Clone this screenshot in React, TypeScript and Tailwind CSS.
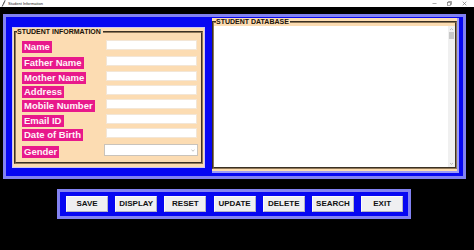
const labels = [
  { text: "Name", mt: "mt-0" },
  { text: "Father Name", mt: "mt-[4px]" },
  { text: "Mother Name", mt: "mt-[3px]" },
  { text: "Address", mt: "mt-[2px]" },
  { text: "Mobile Number", mt: "mt-[2px]" },
  { text: "Email ID", mt: "mt-[3px]" },
  { text: "Date of Birth", mt: "mt-[2px]" },
];

const buttons = ["SAVE", "DISPLAY", "RESET", "UPDATE", "DELETE", "SEARCH", "EXIT"];

function TitleBar() {
  return (
    <div className="h-[7px] bg-white flex items-center relative shrink-0">
      <svg width="5" height="7" viewBox="0 0 5 7" className="ml-[1px]">
        <path d="M4 0.5 L1.2 6.5" stroke="#333" strokeWidth="0.9" />
        <path d="M4 0.5 L3 3.5" stroke="#777" strokeWidth="0.8" />
      </svg>
      <span className="ml-[2px] text-[4px] leading-[7px] text-[#222]">Student Information</span>
      <div className="ml-auto mr-[7px] flex items-center gap-[10px]">
        <svg width="5" height="5" viewBox="0 0 5 5">
          <path d="M0.5 2.5 H4.5" stroke="#888" strokeWidth="0.7" />
        </svg>
        <svg width="5" height="5" viewBox="0 0 5 5">
          <rect x="0.5" y="1.3" width="3" height="3" fill="none" stroke="#777" strokeWidth="0.7" />
          <path d="M1.5 1.3 V0.5 H4.5 V3.4 H3.5" fill="none" stroke="#777" strokeWidth="0.7" />
        </svg>
        <svg width="5" height="5" viewBox="0 0 5 5">
          <path d="M0.7 0.7 L4.3 4.3 M4.3 0.7 L0.7 4.3" stroke="#777" strokeWidth="0.7" />
        </svg>
      </div>
    </div>
  );
}

function StudentInfo() {
  return (
    <div className="ml-[6px] mt-[10px] w-[193px] h-[141px] bg-[#fcdcb2] border border-[#ccc6f2] px-[1px] pb-[3px] flex">
      <fieldset className="flex-1 border-2 [border-style:groove] border-[#8f7858]">
        <legend className="ml-[1px] pr-[2px] text-[7px] leading-[8px] font-bold text-[#1a1208]">
          STUDENT INFORMATION
        </legend>
        <div className="pt-[3px] pl-[6px] flex flex-col">
          {labels.map((l) => (
            <div key={l.text} className={`${l.mt} h-[12px] flex items-center`}>
              <div className="w-[84px] shrink-0">
                <span className="inline-block bg-[#e8198b] text-[#fff4f8] text-[9.5px] leading-[12px] font-bold px-[2px]">
                  {l.text}
                </span>
              </div>
              <div className="w-[91px] h-[10px] bg-white border border-[#f3e6d6]" />
            </div>
          ))}
          <div className="mt-[5px] h-[12px] flex items-center">
            <div className="w-[84px] shrink-0">
              <span className="inline-block bg-[#e8198b] text-[#fff4f8] text-[9.5px] leading-[12px] font-bold px-[2px]">
                Gender
              </span>
            </div>
            <div className="-ml-[2px] w-[94px] h-[12px] bg-white border border-[#c9c3bb] flex items-center justify-end pr-[2px]">
              <svg width="4" height="3" viewBox="0 0 4 3">
                <path d="M0.5 0.8 L2 2.2 L3.5 0.8" fill="none" stroke="#999" strokeWidth="0.6" />
              </svg>
            </div>
          </div>
        </div>
      </fieldset>
    </div>
  );
}

function StudentDatabase() {
  return (
    <div className="ml-[7px] mt-[1px] w-[247px] h-[155px] border-r-2 border-b-2 border-[#9c9cf6] bg-[#fcdcb2] pb-[2px] flex">
      <fieldset className="flex-1 border-2 [border-style:groove] border-[#8f7858] flex min-w-0">
        <legend className="ml-[2px] pr-[1px] text-[7px] leading-[8px] font-bold text-[#1a1208]">
          STUDENT DATABASE
        </legend>
        <div className="flex-1 flex bg-white">
          <div className="flex-1" />
          <div className="w-[7px] bg-[#f0f0f0] flex flex-col items-center">
            <svg width="5" height="5" viewBox="0 0 5 5" className="mt-[1px]">
              <path d="M1 3 L2.5 1.6 L4 3" fill="none" stroke="#999" strokeWidth="0.6" />
            </svg>
            <div className="w-[5px] h-[7px] bg-[#c8c8c8]" />
            <div className="flex-1" />
            <svg width="5" height="5" viewBox="0 0 5 5" className="mb-[1px]">
              <path d="M1 2 L2.5 3.4 L4 2" fill="none" stroke="#999" strokeWidth="0.6" />
            </svg>
          </div>
        </div>
      </fieldset>
    </div>
  );
}

function ButtonBar() {
  return (
    <div className="mt-[10px] ml-[57px] w-[354px] h-[30px] border-[3px] border-[#8282f2] bg-[#0707f2] flex items-center pl-[6px] gap-[7.2px]">
      {buttons.map((b) => (
        <button
          key={b}
          className="w-[42px] h-[16px] bg-[#efeff1] border border-[#fbfbfb] border-r-[#b4b4c4] border-b-[#b4b4c4] text-[8px] leading-[14px] font-bold text-[#111] text-center"
        >
          {b}
        </button>
      ))}
    </div>
  );
}

export default function App() {
  return (
    <div className="w-[474px] h-[250px] bg-black flex flex-col overflow-hidden font-['Liberation_Sans',Arial,sans-serif]">
      <TitleBar />
      <div className="mt-[7px] ml-[3px] w-[463px] h-[165px] shrink-0 border-[3px] border-[#8282f2] bg-[#0707f2] flex items-start">
        <StudentInfo />
        <StudentDatabase />
      </div>
      <ButtonBar />
    </div>
  );
}
